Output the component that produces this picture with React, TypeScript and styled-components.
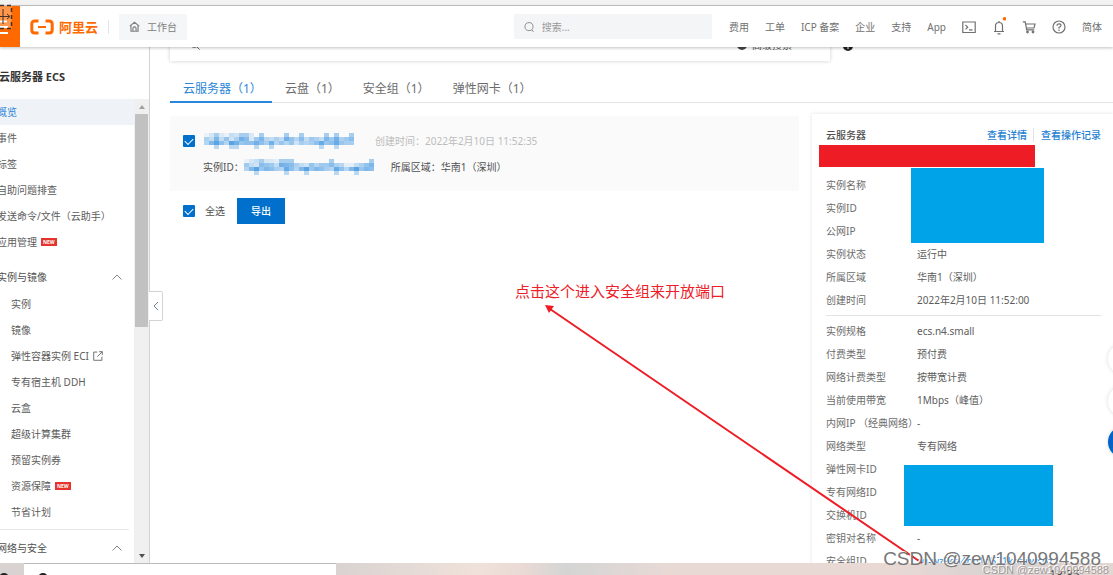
import React from "react";
import styled, { createGlobalStyle } from "styled-components";

const GlobalStyle = createGlobalStyle`
  * { box-sizing: border-box; }
  body {
    margin: 0;
    background: #fff;
    color: #505050;
    font: 10px/14px "Noto Sans", "Noto Sans CJK SC", sans-serif;
    overflow: hidden;
  }
  ul, dl, dd, h2, h3 { margin: 0; padding: 0; list-style: none; }
  button, input { font: inherit; color: inherit; }
  button { border: 0; padding: 0; background: none; }
  a { color: inherit; text-decoration: none; }
`;

const Shell = styled.div`
  position: relative;
  display: flex;
  flex-direction: column;
  height: 100vh;
  overflow: hidden;
`;

const WindowEdge = styled.div`
  flex: none;
  height: 6px;
  background: #f2f2f2;
  border-bottom: 1px solid #c4c4c4;
`;

const Header = styled.header`
  position: relative;
  z-index: 2;
  flex: none;
  display: flex;
  align-items: center;
  height: 41px;
  padding-right: 11px;
  background: #fff;
  box-shadow: 0 1px 3px rgba(0, 0, 0, 0.25);
`;

const MenuButton = styled.button`
  width: 20px;
  height: 41px;
  background: #ff6a00;
  svg { display: block; }
`;

const Brand = styled.a`
  display: flex;
  align-items: center;
  gap: 5px;
  margin-left: 10px;
  color: #ff6a00;
  font-size: 13px;
  font-weight: 700;
  line-height: 20px;
`;

const HeaderRule = styled.span`
  width: 1px;
  height: 14px;
  margin: 0 10px;
  background: #e3e4e6;
`;

const Workbench = styled.button`
  display: flex;
  align-items: center;
  gap: 7px;
  height: 26px;
  padding: 0 10px;
  background: #f5f6f7;
  color: #808080;
`;

const SearchBox = styled.label`
  display: flex;
  align-items: center;
  gap: 7px;
  width: 198px;
  height: 25px;
  margin-left: auto;
  padding: 0 10px;
  background: #f4f5f7;
  color: #888;
  input {
    width: 100%;
    padding: 0;
    border: 0;
    outline: 0;
    background: none;
  }
  input::placeholder { color: #999; opacity: 1; }
`;

const HeaderNav = styled.nav`
  display: flex;
  align-items: center;
  gap: 16px;
  margin-left: 17px;
  color: #707070;
  button, svg { display: block; }
`;

const Body = styled.div`
  flex: 1;
  display: flex;
  min-height: 0;
`;

const Sidebar = styled.aside`
  position: relative;
  flex: none;
  display: flex;
  flex-direction: column;
  width: 150px;
  border-right: 1px solid #cfd2d6;
`;

const SidebarTitle = styled.h2`
  height: 52px;
  padding: 20px 0 0;
  margin-left: -1px;
  color: #333;
  font-size: 11px;
  line-height: 20px;
`;

const Scroller = styled.div`
  flex: 1;
  display: flex;
  min-height: 0;
`;

const Menu = styled.nav`
  flex: 1;
  overflow: hidden;
`;

const MenuLink = styled.a<{ $active?: boolean; $sub?: boolean }>`
  display: flex;
  align-items: center;
  gap: 4px;
  height: 26px;
  padding-left: ${(p) => (p.$sub ? "11px" : "0")};
  text-indent: ${(p) => (p.$sub ? "0" : "-3px")};
  white-space: nowrap;
  background: ${(p) => (p.$active ? "#eff3f8" : "none")};
  color: ${(p) => (p.$active ? "#2a86d8" : "#5c5c5c")};
`;

const MenuSection = styled.button<{ $ruled?: boolean }>`
  display: flex;
  align-items: center;
  justify-content: space-between;
  width: 129px;
  height: 36px;
  margin-top: 4px;
  padding-right: 7px;
  border-top: ${(p) => (p.$ruled ? "1px solid #e8e8e8" : "0")};
  text-indent: -3px;
  color: #505050;
`;

const SubMenu = styled.ul`
  margin-top: -4px;
`;

const NewBadge = styled.span`
  padding: 0 2px;
  background: #e4342d;
  color: #fff;
  font-size: 5px;
  font-weight: 700;
  line-height: 8px;
  text-indent: 0;
`;

const ScrollTrack = styled.div`
  flex: none;
  display: flex;
  flex-direction: column;
  align-items: center;
  justify-content: space-between;
  width: 15px;
  padding-bottom: 4px;
  background: #f0f0f0;
`;

const ScrollThumb = styled.div`
  width: 13px;
  height: 213px;
  background: #c1c1c1;
`;

const ScrollArrow = styled.svg`
  display: block;
  margin: 5px auto;
`;

const Collapse = styled.button`
  position: absolute;
  z-index: 1;
  top: 244px;
  left: 149px;
  width: 14px;
  height: 30px;
  border: 1px solid #d0d4d8;
  border-left: 0;
  border-radius: 0 2px 2px 0;
  background: #fff;
  svg { display: block; margin: auto; }
`;

const Main = styled.main`
  flex: 1;
  min-width: 0;
  padding-left: 20px;
  overflow: hidden;
`;

const FilterRow = styled.div`
  display: flex;
  align-items: center;
  gap: 13px;
  height: 34px;
  margin-top: -20px;
`;

const FilterCard = styled.div`
  display: flex;
  align-items: center;
  gap: 5px;
  flex: 0 0 70%;
  height: 34px;
  padding: 2px 15px 0 20px;
  box-shadow: 0 0 4px rgba(0, 0, 0, 0.2);
  input {
    flex: 1;
    border: 0;
    outline: 0;
    background: none;
  }
`;

const Tabs = styled.div`
  display: flex;
  height: 42px;
  padding-top: 15px;
  border-bottom: 1px solid #e5e5e5;
`;

const Tab = styled.button<{ $active?: boolean }>`
  height: 27px;
  padding: 0 10px 0 13px;
  border-bottom: 2px solid ${(p) => (p.$active ? "#2a86d8" : "transparent")};
  color: ${(p) => (p.$active ? "#2a86d8" : "#6c6c6c")};
  font-size: 12px;
  line-height: 25px;
  white-space: nowrap;
`;

const Columns = styled.div`
  display: flex;
  gap: 13px;
  margin-top: 11px;
`;

const Instances = styled.section`
  flex: 1;
  min-width: 0;
  padding-top: 2px;
`;

const InstanceCard = styled.div`
  display: flex;
  flex-direction: column;
  gap: 4px;
  padding: 14px 13px 13px;
  background: #fafafa;
`;

const InstanceRow = styled.div<{ $indent?: boolean }>`
  display: flex;
  align-items: center;
  height: 22px;
  padding-left: ${(p) => (p.$indent ? "20px" : "0")};
  white-space: nowrap;
`;

const HiddenName = styled.span`
  display: flex;
  margin: 0 17px 0 9px;
`;

const HiddenId = styled.span`
  display: flex;
  margin-right: 17px;
`;

const Created = styled.span`
  color: #bcbcbc;
`;

const CheckLabel = styled.label`
  display: flex;
  align-items: center;
  gap: 10px;
`;

const Checkbox = styled.input`
  appearance: none;
  flex: none;
  width: 12px;
  height: 12px;
  margin: 0;
  border-radius: 1px;
  background: #0070cc;
  display: grid;
  place-items: center;
  &::after {
    content: "";
    width: 7px;
    height: 4px;
    margin-top: -2px;
    border-left: 1px solid #fff;
    border-bottom: 1px solid #fff;
    transform: rotate(-45deg);
  }
`;

const BulkRow = styled.div`
  display: flex;
  align-items: center;
  gap: 12px;
  padding: 7px 13px;
`;

const PrimaryButton = styled.button`
  width: 48px;
  height: 26px;
  background: #0070cc;
  color: #fff;
  font-weight: 500;
`;

const Panel = styled.aside`
  flex: none;
  width: 301px;
  height: 480px;
  padding: 10px 12px 0 14px;
  box-shadow: 0 0 4px rgba(0, 0, 0, 0.12);
`;

const PanelHead = styled.div`
  display: flex;
  align-items: center;
  height: 22px;
  margin-bottom: 28px;
  h3 { flex: 1; font-size: 10px; font-weight: 500; }
`;

const PanelLink = styled.a`
  color: #1f7fd1;
  font-weight: 500;
  & + & {
    margin-left: 6px;
    padding-left: 7px;
    border-left: 1px solid #e3e3e3;
  }
`;

const Details = styled.dl`
  & + & {
    margin-top: 3px;
    padding-top: 4px;
    border-top: 1px solid #e3e3e3;
  }
`;

const Detail = styled.div`
  display: flex;
  height: 23px;
  line-height: 23px;
  white-space: nowrap;
  dt { width: 91px; color: #6c6c6c; }
  dd { color: #5c5c5c; }
  a { color: #2a86d8; }
`;

const Taskbar = styled.footer`
  flex: none;
  display: flex;
  height: 12px;
  background: linear-gradient(90deg, #d8d2d0 0 30%, #f0e2da 43%, #ead9d4 47%, #d3d5d4 51%, #e8d9d5 60%, #e9d9d5 80%, #d6d2d1 90%, #e3d7d3);
  svg { display: block; }
`;

const TaskbarWindow = styled.div`
  width: 312px;
  padding-left: 13px;
  border-top: 1px solid #bbb;
  background: #fff;
`;

const Clock = styled.time`
  margin: 5px 33px 0 auto;
  color: #444;
  font-size: 12px;
  line-height: 14px;
`;

const Redaction = styled.div<{ $x: number; $y: number; $w: number; $h: number; $color: string }>`
  position: absolute;
  z-index: 3;
  right: ${(p) => p.$x}px;
  top: ${(p) => p.$y}px;
  width: ${(p) => p.$w}px;
  height: ${(p) => p.$h}px;
  background: ${(p) => p.$color};
`;

const Note = styled.p`
  position: absolute;
  z-index: 3;
  right: 388px;
  top: 281px;
  margin: 0;
  color: #ee2027;
  font-size: 15px;
  line-height: 20px;
  white-space: nowrap;
`;

const Arrow = styled.svg`
  position: absolute;
  z-index: 3;
  right: 189px;
  top: 303px;
`;

const Floating = styled.button<{ $top: number; $primary?: boolean }>`
  position: absolute;
  z-index: 3;
  top: ${(p) => p.$top}px;
  right: -27px;
  width: 32px;
  height: 32px;
  border-radius: 50%;
  background: ${(p) => (p.$primary ? "#0064c8" : "#fff")};
  box-shadow: 0 0 4px rgba(0, 0, 0, 0.15);
`;

const Watermark = styled.span<{ $small?: boolean }>`
  position: absolute;
  z-index: 4;
  right: ${(p) => (p.$small ? 4 : 12)}px;
  bottom: ${(p) => (p.$small ? -2 : 5)}px;
  color: ${(p) => (p.$small ? "#a39b99" : "#777")};
  font-family: "Liberation Sans", sans-serif;
  font-size: ${(p) => (p.$small ? 11 : 19)}px;
  line-height: ${(p) => (p.$small ? 14 : 22)}px;
  text-shadow: -1px -1px 0 #fff;
  white-space: nowrap;
`;

const CaptureMark = styled.svg`
  position: absolute;
  z-index: 4;
  top: 4px;
  left: 0;
`;

const nameTones = "5393725a81694353a748365396a56868896554648a4372";
const idTones = "6328763a9853274668540035798368";

/* Pixelated stand-in for a hidden identifier. */
const Mosaic = ({ tones, width }: { tones: string; width: number }) => {
  const cols = Math.floor(width / 5);
  return (
    <svg width={width} height="16" viewBox={`0 0 ${width} 16`} aria-hidden="true">
      {Array.from({ length: cols }, (_, i) => {
        const t = parseInt(tones[i % tones.length], 16);
        const u = parseInt(tones[(i * 3 + 1) % tones.length], 16);
        return (
          <g key={i} fill="#2a8ade">
            <rect x={i * 5} y="0" width="5" height="4" opacity={t > 7 ? 0.4 : i < cols / 3 ? u / 40 : 0} />
            <rect x={i * 5} y="4" width="5" height="4" opacity={0.1 + t / 18} />
            <rect x={i * 5} y="8" width="5" height="4" opacity={0.15 + u / 16} />
            <rect x={i * 5} y="12" width="5" height="4" opacity={u > 7 ? 0.3 : 0} />
          </g>
        );
      })}
    </svg>
  );
};

const Icon = ({ children, size = 14 }: { children: React.ReactNode; size?: number }) => (
  <svg width={size} height={size} viewBox="0 0 14 14" fill="none" stroke="currentColor" strokeWidth="1.2" aria-hidden="true">
    {children}
  </svg>
);

const Chevron = () => (
  <svg width="10" height="6" viewBox="0 0 10 6" fill="none" stroke="#888" aria-hidden="true">
    <path d="M0.5 5.5 5 1l4.500 4.500" />
  </svg>
);

const topItems: { label: string; active?: boolean; isNew?: boolean }[] = [
  { label: "概览", active: true },
  { label: "事件" },
  { label: "标签" },
  { label: "自助问题排查" },
  { label: "发送命令/文件（云助手）" },
  { label: "应用管理", isNew: true },
];

const subItems: { label: string; external?: boolean; isNew?: boolean }[] = [
  { label: "实例" },
  { label: "镜像" },
  { label: "弹性容器实例 ECI", external: true },
  { label: "专有宿主机 DDH" },
  { label: "云盒" },
  { label: "超级计算集群" },
  { label: "预留实例券" },
  { label: "资源保障", isNew: true },
  { label: "节省计划" },
];

const tabs = ["云服务器（1）", "云盘（1）", "安全组（1）", "弹性网卡（1）"];

const basics: [string, string][] = [
  ["实例名称", ""],
  ["实例ID", ""],
  ["公网IP", ""],
  ["实例状态", "运行中"],
  ["所属区域", "华南1（深圳）"],
  ["创建时间", "2022年2月10日 11:52:00"],
];

const specs: [string, string][] = [
  ["实例规格", "ecs.n4.small"],
  ["付费类型", "预付费"],
  ["网络计费类型", "按带宽计费"],
  ["当前使用带宽", "1Mbps（峰值）"],
  ["内网IP （经典网络）", "-"],
  ["网络类型", "专有网络"],
  ["弹性网卡ID", ""],
  ["专有网络ID", ""],
  ["交换机ID", ""],
  ["密钥对名称", "-"],
];

export default function App() {
  return (
    <>
      <GlobalStyle />
      <Shell>
        <WindowEdge />
        <Header>
          <MenuButton aria-label="菜单">
            <svg width="20" height="41" viewBox="0 0 20 41" stroke="#fff" strokeWidth="2">
              <path d="M0 15.500h7M0 21h8M0 27h8" />
            </svg>
          </MenuButton>
          <Brand href="#">
            <svg width="24" height="16" viewBox="0 0 24 16" fill="none" stroke="#ff6a00" strokeWidth="3" aria-hidden="true">
              <path d="M8.500 2H5Q1.800 2 1.800 5v6q0 3 3.200 3h3.500M15.500 2H19q3.200 0 3.200 3v6q0 3-3.200 3h-3.500" />
              <path d="M8 8h8" strokeWidth="2" />
            </svg>
            阿里云
          </Brand>
          <HeaderRule />
          <Workbench>
            <Icon size={11}>
              <path d="M1 6.500 7 1.500l6 5M2.500 5.500V13h9V5.500M5 13V9.500q0-2 2-2t2 2V13" strokeWidth="1.500" />
            </Icon>
            工作台
          </Workbench>
          <SearchBox>
            <Icon size={12}>
              <circle cx="6.500" cy="6.500" r="5.200" />
              <path d="m10 10.500 2.500 3" />
            </Icon>
            <input type="search" placeholder="搜索..." aria-label="搜索" />
          </SearchBox>
          <HeaderNav>
            <a href="#">费用</a>
            <a href="#">工单</a>
            <a href="#">ICP 备案</a>
            <a href="#">企业</a>
            <a href="#">支持</a>
            <a href="#">App</a>
            <button aria-label="命令行">
              <Icon>
                <path d="M.8 2h12.400v10.500H.8zM3.500 5l2.200 2.200-2.200 2.200M7 9.800h3.500" />
              </Icon>
            </button>
            <button aria-label="通知">
              <svg width="14" height="20" viewBox="0 0 14 20" fill="none" stroke="currentColor" strokeWidth="1.200">
                <path d="M2 14.500h10M3.500 14.500V9q0-3.500 3.500-3.500T10.500 9v5.500M7 5.500V4M5.500 16.800h3" />
                <circle cx="12.500" cy="1.800" r="1.800" fill="#ff6a00" stroke="none" />
              </svg>
            </button>
            <button aria-label="购物车">
              <Icon>
                <path d="M.8 1.800h2.400l1.500 8h7.500M3.600 4h9.400l-1 4H4.400" />
                <circle cx="5.500" cy="12" r=".8" />
                <circle cx="11" cy="12" r=".8" />
              </Icon>
            </button>
            <button aria-label="帮助">
              <Icon>
                <circle cx="7" cy="7" r="6" />
                <path d="M5 5.800Q5 3.800 7 3.800t2 1.700Q9 6.500 7 7.400v1.200M7 9.600v1.300" />
              </Icon>
            </button>
            <a href="#">简体</a>
          </HeaderNav>
        </Header>

        <Body>
          <Sidebar>
            <SidebarTitle>云服务器 ECS</SidebarTitle>
            <Scroller>
              <Menu>
                <ul>
                  {topItems.map((item) => (
                    <li key={item.label}>
                      <MenuLink href="#" $active={item.active}>
                        {item.label}
                        {item.isNew && <NewBadge>NEW</NewBadge>}
                      </MenuLink>
                    </li>
                  ))}
                </ul>
                <MenuSection>
                  实例与镜像
                  <Chevron />
                </MenuSection>
                <SubMenu>
                  {subItems.map((item) => (
                    <li key={item.label}>
                      <MenuLink href="#" $sub>
                        {item.label}
                        {item.external && (
                          <Icon size={10}>
                            <path d="M6 1.500H1v11.500h11.500V8M8.500 1H13v4.500M13 1 6 8" />
                          </Icon>
                        )}
                        {item.isNew && <NewBadge>NEW</NewBadge>}
                      </MenuLink>
                    </li>
                  ))}
                </SubMenu>
                <MenuSection $ruled>
                  网络与安全
                  <Chevron />
                </MenuSection>
              </Menu>
              <ScrollTrack>
                <div>
                  <ScrollArrow width="6" height="5" viewBox="0 0 6 5" fill="#a0a0a0">
                    <path d="M0 5 3 1l3 4z" />
                  </ScrollArrow>
                  <ScrollThumb />
                </div>
                <svg width="6" height="5" viewBox="0 0 6 5" fill="#505050">
                  <path d="M0 0h6L3 4z" />
                </svg>
              </ScrollTrack>
            </Scroller>
            <Collapse aria-label="收起">
              <svg width="6" height="10" viewBox="0 0 6 10" fill="none" stroke="#6d7f92">
                <path d="M5 1 1 5l4 4" />
              </svg>
            </Collapse>
          </Sidebar>

          <Main>
            <FilterRow>
              <FilterCard>
                <Icon size={10}>
                  <circle cx="6" cy="6" r="4.500" />
                  <path d="m9.500 9.500 4 4" />
                </Icon>
                <input aria-label="资源搜索" />
                <svg width="10" height="10" viewBox="0 0 10 10">
                  <circle cx="5" cy="5" r="5" fill="#444" />
                </svg>
                <span>高级搜索</span>
                <svg width="18" height="10" viewBox="0 0 18 10" fill="none" stroke="#666">
                  <path d="m11 4 3 3 3-3" />
                </svg>
              </FilterCard>
              <svg width="10" height="14" viewBox="0 0 10 14">
                <circle cx="5" cy="9" r="5" fill="#222" />
                <path d="M5 6v6" stroke="#fff" />
              </svg>
            </FilterRow>
            <Tabs role="tablist">
              {tabs.map((label, i) => (
                <Tab key={label} role="tab" aria-selected={i === 0} $active={i === 0}>
                  {label}
                </Tab>
              ))}
            </Tabs>
            <Columns>
              <Instances>
                <InstanceCard>
                  <InstanceRow>
                    <Checkbox type="checkbox" defaultChecked aria-label="选择实例" />
                    <HiddenName>
                      <Mosaic tones={nameTones} width={154} />
                    </HiddenName>
                    <Created>创建时间：2022年2月10日 11:52:35</Created>
                  </InstanceRow>
                  <InstanceRow $indent>
                    <span>实例ID：</span>
                    <HiddenId>
                      <Mosaic tones={idTones} width={130} />
                    </HiddenId>
                    <span>所属区域：华南1（深圳）</span>
                  </InstanceRow>
                </InstanceCard>
                <BulkRow>
                  <CheckLabel>
                    <Checkbox type="checkbox" defaultChecked />
                    全选
                  </CheckLabel>
                  <PrimaryButton>导出</PrimaryButton>
                </BulkRow>
              </Instances>

              <Panel>
                <PanelHead>
                  <h3>云服务器</h3>
                  <PanelLink href="#">查看详情</PanelLink>
                  <PanelLink href="#">查看操作记录</PanelLink>
                </PanelHead>
                <Details>
                  {basics.map(([k, v]) => (
                    <Detail key={k}>
                      <dt>{k}</dt>
                      <dd>{v}</dd>
                    </Detail>
                  ))}
                </Details>
                <Details>
                  {specs.map(([k, v]) => (
                    <Detail key={k}>
                      <dt>{k}</dt>
                      <dd>{v}</dd>
                    </Detail>
                  ))}
                  <Detail>
                    <dt>安全组ID</dt>
                    <dd>
                      <a href="#">sg-wz9ea4no1g571kgnrwc6z</a>
                    </dd>
                  </Detail>
                </Details>
              </Panel>
            </Columns>
          </Main>
        </Body>

        <Taskbar>
          <svg width="24" height="12" viewBox="0 0 24 12" aria-hidden="true">
            <circle cx="4" cy="15" r="5" fill="#222" />
          </svg>
          <TaskbarWindow>
            <svg width="12" height="11" viewBox="0 0 12 11" aria-hidden="true">
              <circle cx="6" cy="14" r="5" fill="#222" />
            </svg>
          </TaskbarWindow>
          <Clock>13:35</Clock>
        </Taskbar>

        <Redaction $x={78} $y={145} $w={216} $h={22} $color="#ee1c25" />
        <Redaction $x={69} $y={168} $w={133} $h={75} $color="#00a2e8" />
        <Redaction $x={60} $y={465} $w={149} $h={61} $color="#00a2e8" />
        <Note>点击这个进入安全组来开放端口</Note>
        <Arrow width="380" height="262" viewBox="0 0 380 262" aria-hidden="true">
          <path d="M6 6 378 260" stroke="#ee1c25" strokeWidth="2" />
          <path d="M1 2 10 3 5 10z" fill="#ee1c25" />
        </Arrow>
        <Floating $top={343} aria-label="咨询" />
        <Floating $top={385} aria-label="反馈" />
        <Floating $top={426} $primary aria-label="助手" />
        <CaptureMark width="13" height="26" viewBox="0 0 13 26" fill="none" stroke="#4a3020" strokeWidth="1.500" aria-hidden="true">
          <path d="M0 1.500h11.500V24.500H0" fill="#fff" fillOpacity="0.300" strokeDasharray="4 3" />
          <path d="M0 12.500h9M7 10l3 2.500L7 15M3 5v15" strokeWidth="1" />
        </CaptureMark>
        <Watermark>CSDN @zew1040994588</Watermark>
        <Watermark $small>CSDN @zew1040994588</Watermark>
      </Shell>
    </>
  );
}
